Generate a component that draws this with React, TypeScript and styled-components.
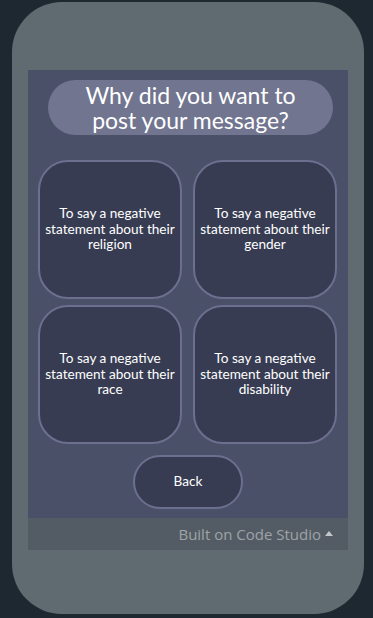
import React from "react";
import styled, { createGlobalStyle } from "styled-components";

const Global = createGlobalStyle`
  body {
    margin: 0;
    background: #1e2830;
    font-family: "Lato", "DejaVu Sans", sans-serif;
  }
`;

const Frame = styled.div`
  margin: 2px 0 0 12px;
  width: 352px;
  height: 612px;
  box-sizing: border-box;
  padding: 68px 16px 0;
  border-radius: 50px;
  background: #5f6b71;
`;

const Screen = styled.div`
  width: 320px;
  height: 480px;
  display: flex;
  flex-direction: column;
  background: #4a5068;
`;

const Content = styled.div`
  flex: 1;
  display: flex;
  flex-direction: column;
  align-items: center;
  padding-top: 10px;
`;

const TitlePill = styled.h1`
  align-self: stretch;
  margin: 0 15px 0 20px;
  height: 55px;
  display: flex;
  flex-direction: column;
  align-items: center;
  justify-content: center;
  text-align: center;
  border-radius: 28px;
  background: #71758f;
  color: #ffffff;
  font-size: 23px;
  font-weight: 400;
  line-height: 25px;
`;

const TitleLine = styled.span`
  display: block;
`;

const Grid = styled.div`
  align-self: stretch;
  display: grid;
  grid-template-columns: 144px 144px;
  grid-auto-rows: 139px;
  column-gap: 11px;
  row-gap: 6px;
  padding: 0 11px 0 10px;
  margin-top: 25px;
`;

const Choice = styled.button<{ $pill?: boolean }>`
  box-sizing: border-box;
  display: flex;
  align-items: center;
  justify-content: center;
  padding: 0 3px;
  border: 2px solid #6c6f8e;
  border-radius: ${(p) => (p.$pill ? "27px" : "30px")};
  background: #373c52;
  color: #ffffff;
  font-family: "Lato", "DejaVu Sans", sans-serif;
  font-size: 13.6px;
  line-height: 15.5px;
  text-align: center;
`;

const BackButton = styled(Choice)`
  width: 110px;
  height: 54px;
  margin-top: 11px;
`;

const Footer = styled.div`
  height: 32px;
  display: flex;
  align-items: center;
  justify-content: flex-end;
  gap: 4px;
  padding-right: 15px;
  background: #535c64;
  color: #9ea3a8;
  font-family: "Open Sans", sans-serif;
  font-size: 15px;
`;

const Caret = styled.span`
  width: 0;
  height: 0;
  border-left: 4px solid transparent;
  border-right: 4px solid transparent;
  border-bottom: 5px solid #c3c7ca;
  margin-bottom: 2px;
`;

const choices = [
  "To say a negative statement about their religion",
  "To say a negative statement about their gender",
  "To say a negative statement about their race",
  "To say a negative statement about their disability",
];

export default function App() {
  return (
    <>
      <Global />
      <Frame>
        <Screen>
          <Content>
            <TitlePill>
              <TitleLine>Why did you want to</TitleLine>
              <TitleLine>post your message?</TitleLine>
            </TitlePill>
            <Grid>
              {choices.map((c) => (
                <Choice key={c}>{c}</Choice>
              ))}
            </Grid>
            <BackButton $pill>Back</BackButton>
          </Content>
          <Footer>
            Built on Code Studio
            <Caret />
          </Footer>
        </Screen>
      </Frame>
    </>
  );
}
